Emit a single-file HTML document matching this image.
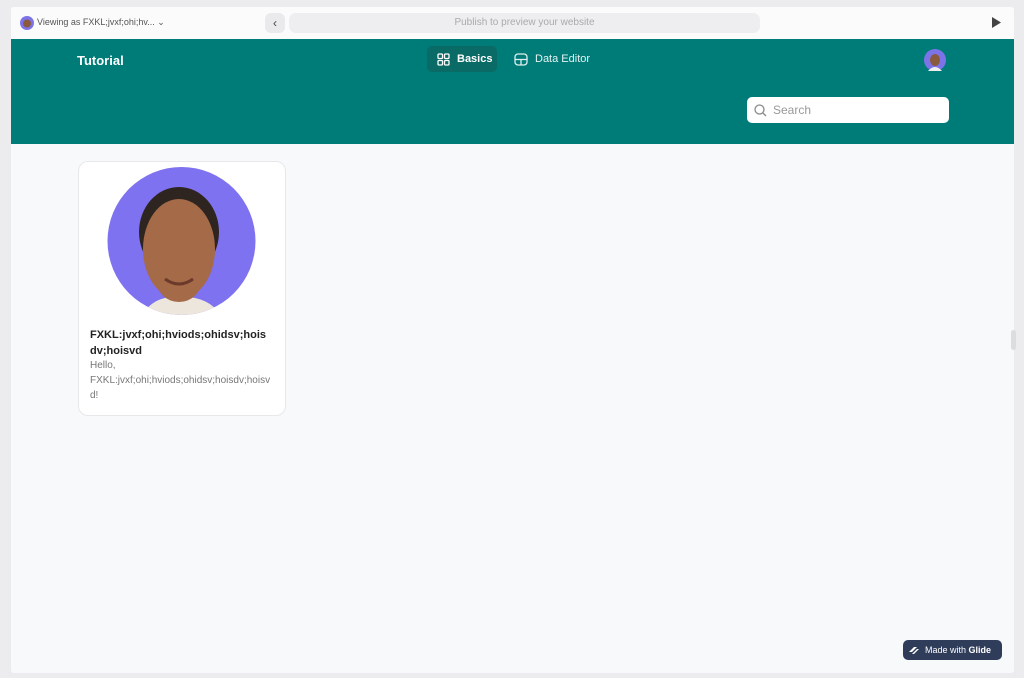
<!DOCTYPE html>
<html><head><style>
*{box-sizing:border-box;margin:0;padding:0}
body{width:1024px;height:678px;background:#ececee;font-family:"Liberation Sans",sans-serif;position:relative;overflow:hidden}
.frame{position:absolute;left:11px;top:7px;width:1003px;height:666px;background:#f7f9fa;overflow:hidden;border-radius:3px}
.top{position:absolute;left:0;top:0;width:100%;height:32px;background:#fbfbfc}
.teal{position:absolute;left:0;top:32px;width:100%;height:105px;background:#007c78}
.t{position:absolute;white-space:nowrap}
</style></head><body>
<div class="frame">
 <div class="top">
  <svg class="t" style="left:9px;top:9px" width="14" height="14"><circle cx="7" cy="7" r="7" fill="#7d73e8"/><circle cx="7" cy="7.5" r="4" fill="#8a5a3c"/></svg>
  <div class="t" style="left:26px;top:10px;font-size:9px;color:#555">Viewing as FXKL;jvxf;ohi;hv... &#8964;</div>
  <div class="t" style="left:254px;top:6px;width:20px;height:20px;border-radius:6px;background:#eaeaec;color:#444;font-size:12px;text-align:center;line-height:20px">&#8249;</div>
  <div class="t" style="left:278px;top:6px;width:471px;height:20px;border-radius:7px;background:#eeeef0;color:#aaa;font-size:10px;text-align:center;line-height:20px">Publish to preview your website</div>
  <svg class="t" style="left:980px;top:10px" width="10" height="11"><path d="M1 0L10 5.5L1 11Z" fill="#444"/></svg>
 </div>
 <div class="teal">
  <div class="t" style="left:66px;top:14px;color:#fff;font-weight:bold;font-size:13px">Tutorial</div>
  <div class="t" style="left:416px;top:7px;width:70px;height:26px;border-radius:5px;background:#0a6a66"></div>
  <svg class="t" style="left:426px;top:14px" width="13" height="13" fill="none" stroke="#fff" stroke-width="1.3"><rect x="1" y="1" width="4.5" height="4.5" rx="1"/><rect x="7.5" y="1" width="4.5" height="4.5" rx="1"/><rect x="1" y="7.5" width="4.5" height="4.5" rx="1"/><rect x="7.5" y="7.5" width="4.5" height="4.5" rx="1"/></svg>
  <div class="t" style="left:446px;top:14px;color:#fff;font-weight:bold;font-size:11px">Basics</div>
  <svg class="t" style="left:503px;top:14px" width="14" height="13" fill="none" stroke="#e0f0ef" stroke-width="1.3"><rect x="1" y="1" width="12" height="11" rx="3"/><path d="M1 6.5H13M7 6.5V12"/></svg>
  <div class="t" style="left:524px;top:14px;color:#e6f3f2;font-size:11px">Data Editor</div>
  <svg class="t" style="left:913px;top:10px" width="22" height="22"><circle cx="11" cy="11" r="11" fill="#7d73e8"/><ellipse cx="11" cy="11" rx="5" ry="6" fill="#8a5a3c"/><path d="M4 22Q11 14 18 22Z" fill="#eee"/></svg>
  <div class="t" style="left:736px;top:58px;width:202px;height:26px;border-radius:5px;background:#fff"></div>
  <svg class="t" style="left:743px;top:65px" width="13" height="13" fill="none" stroke="#888" stroke-width="1.3"><circle cx="5.5" cy="5.5" r="4.5"/><path d="M9 9L12 12"/></svg>
  <div class="t" style="left:762px;top:64px;color:#999;font-size:12px">Search</div>
 </div>
 <div class="t" style="left:67px;top:154px;width:208px;height:255px;background:#fff;border:1px solid #e8e8ea;border-radius:10px"></div>
 <svg class="t" style="left:96px;top:160px" width="149" height="148">
  <defs><clipPath id="c"><circle cx="74.5" cy="74" r="74"/></clipPath></defs>
  <circle cx="74.5" cy="74" r="74" fill="#7f72f0"/>
  <g clip-path="url(#c)">
   <ellipse cx="72" cy="65" rx="40" ry="45" fill="#2f2520"/>
   <ellipse cx="72" cy="82" rx="36" ry="50" fill="#a56a48"/>
   <path d="M30 160Q40 128 72 130Q108 128 120 160Z" fill="#ece6dc"/>
   <ellipse cx="72" cy="115" rx="22" ry="20" fill="#a56a48"/>
   <path d="M58 112Q72 122 86 112" stroke="#6b3a2a" stroke-width="3" fill="none"/>
  </g>
 </svg>
 <div class="t" style="left:79px;top:320px;width:182px;white-space:normal;font-size:11px;line-height:16px;font-weight:bold;color:#222;word-break:break-all">FXKL:jvxf;ohi;hviods;ohidsv;hoisdv;hoisvd</div>
 <div class="t" style="left:79px;top:351px;width:183px;white-space:normal;font-size:10px;line-height:15px;color:#777;overflow-wrap:anywhere">Hello, FXKL:jvxf;ohi;hviods;ohidsv;hoisdv;hoisvd!</div>
 <div class="t" style="left:892px;top:633px;width:99px;height:20px;border-radius:5px;background:#2f3c5a"></div>
 <svg class="t" style="left:897px;top:637px" width="12" height="12" fill="#fff"><path d="M1 8L6 3H9L4 8Z"/><path d="M4 10L9 5H11L6 10Z"/></svg>
 <div class="t" style="left:914px;top:638px;color:#fff;font-size:9px">Made with <b>Glide</b></div>
</div>
<div class="t" style="left:1011px;top:330px;width:5px;height:20px;border-radius:3px;background:#ddd"></div>
</body></html>
